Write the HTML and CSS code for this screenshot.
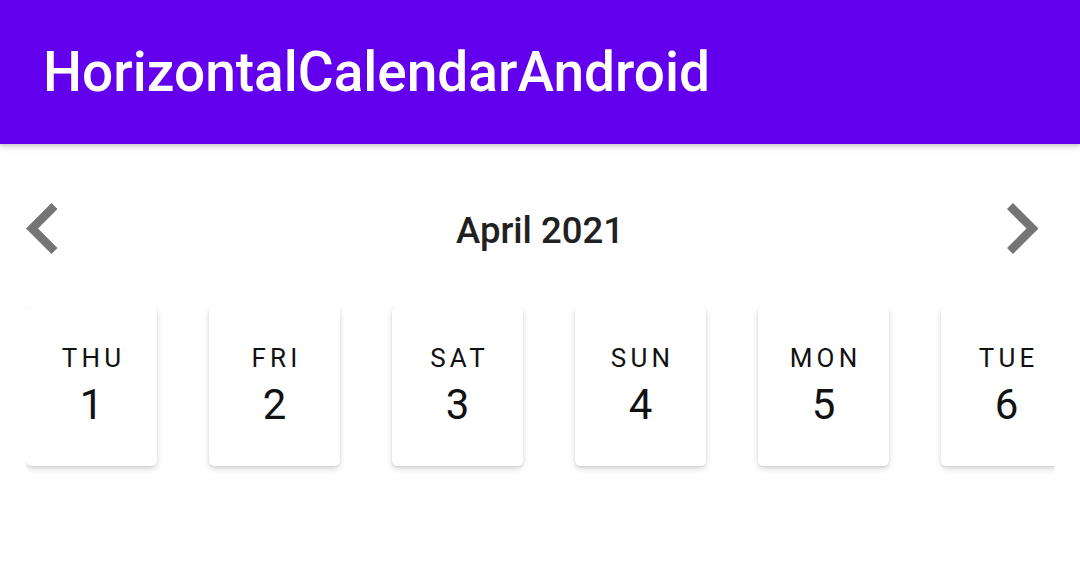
FILE: index.html
```html
<!DOCTYPE html>
<html>
<head>
<meta charset="utf-8">
<link rel="stylesheet" href="styles.css">
</head>
<body>
<header class="appbar">
  <h1 class="title">HorizontalCalendarAndroid</h1>
</header>
<main class="content">
  <div class="nav">
    <svg class="chev" viewBox="8 6 7.41 12" width="31.5" height="51"><path d="M15.41 7.41L14 6l-6 6 6 6 1.41-1.41L10.83 12z" fill="#757575"/></svg>
    <div class="month">April 2021</div>
    <svg class="chev" viewBox="8.59 6 7.41 12" width="31.5" height="51"><path d="M10 6L8.59 7.41 13.17 12l-4.58 4.59L10 18l6-6z" fill="#757575"/></svg>
  </div>
  <div class="strip">
    <div class="days">
      <div class="card"><div class="dow">THU</div><div class="num">1</div></div>
      <div class="card"><div class="dow">FRI</div><div class="num">2</div></div>
      <div class="card"><div class="dow">SAT</div><div class="num">3</div></div>
      <div class="card"><div class="dow">SUN</div><div class="num">4</div></div>
      <div class="card"><div class="dow">MON</div><div class="num">5</div></div>
      <div class="card"><div class="dow">TUE</div><div class="num">6</div></div>
    </div>
  </div>
</main>
</body>
</html>
```
FILE: styles.css
```css
html, body {
  margin: 0;
  padding: 0;
  background: #ffffff;
  font-family: Roboto, "Liberation Sans", sans-serif;
  width: 1080px;
  height: 584px;
  overflow: hidden;
}
.appbar {
  height: 144px;
  background: #6200ee;
  display: flex;
  align-items: center;
  padding-left: 43px;
  box-shadow: 0 2px 4px rgba(0,0,0,0.18), 0 4px 10px rgba(0,0,0,0.06);
  position: relative;
  z-index: 1;
}
.title {
  margin: 0;
  color: #ffffff;
  font-size: 55px;
  font-weight: 500;
  letter-spacing: 0;
}
.content {
  padding: 0 26px;
}
.nav {
  margin-top: 59px;
  margin-right: 16px;
  height: 51px;
  display: flex;
  align-items: center;
  justify-content: space-between;
}
.chev {
  display: block;
}
.month {
  font-size: 36.5px;
  font-weight: 500;
  color: #212121;
  margin-top: 3px;
  margin-left: 16px;
}
.strip {
  margin-top: 52px;
  width: 1028px;
  overflow: hidden;
  padding-bottom: 16px;
}
.days {
  display: flex;
  gap: 52px;
}
.card {
  flex: 0 0 131px;
  height: 160px;
  background: #ffffff;
  border-radius: 5px;
  box-shadow: 0 3px 6px rgba(0,0,0,0.15), 0 1px 2px rgba(0,0,0,0.08);
  display: flex;
  flex-direction: column;
  align-items: center;
  padding-top: 37px;
  box-sizing: border-box;
}
.dow {
  font-size: 26px;
  line-height: 30px;
  letter-spacing: 4.2px;
  margin-right: -4.2px;
  color: #111111;
}
.num {
  margin-top: 8px;
  font-size: 42px;
  line-height: 48px;
  color: #111111;
}
```
